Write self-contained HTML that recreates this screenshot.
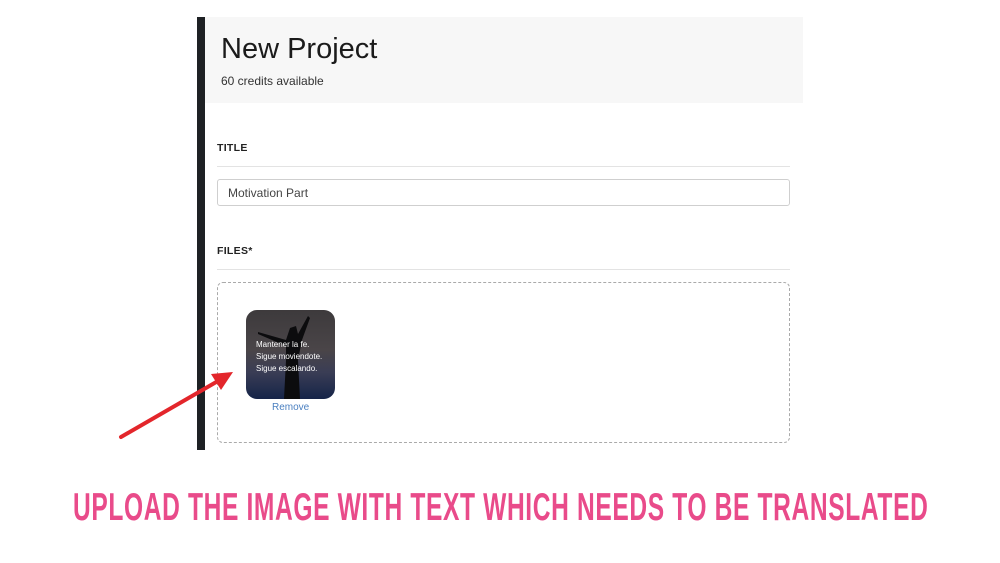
<!DOCTYPE html>
<html><head><style>
body{margin:0;width:1000px;height:563px;background:#fff;position:relative;overflow:hidden;font-family:"Liberation Sans",sans-serif;}
.bar{position:absolute;left:197px;top:17px;width:8px;height:433px;background:#1e2124;}
.hdr{position:absolute;left:205px;top:17px;width:598px;height:86px;background:#f7f7f7;}
.h1{position:absolute;left:221px;top:33px;font-size:29px;color:#1b1b1b;}
.sub{position:absolute;left:221px;top:74px;font-size:12px;color:#333;}
.lbl{position:absolute;left:217px;font-size:10.5px;font-weight:bold;color:#222;letter-spacing:.3px;}
.hr{position:absolute;left:217px;width:573px;height:1px;background:#e3e3e3;}
.inp{position:absolute;left:217px;top:179px;height:27px;border:1px solid #cfcfcf;border-radius:3px;font-size:12px;color:#444;line-height:27px;box-sizing:border-box;padding-left:10px;width:573px;}
.drop{position:absolute;left:217px;top:282px;width:573px;height:161px;border:1.5px dashed #aaa;border-radius:6px;box-sizing:border-box;}
.img{position:absolute;left:246px;top:310px;width:89px;height:89px;border-radius:11px;background:linear-gradient(#3d3a3c,#4a4548 45%,#3a3d55 70%,#152448);overflow:hidden;}
.img span{position:absolute;left:10px;font-size:8px;color:#fff;}
.rm{position:absolute;left:272px;top:402px;font-size:10px;color:#4a7fc0;}
.cap{position:absolute;left:73px;top:486px;font-size:39px;font-weight:bold;color:#e94b8a;white-space:nowrap;transform:scaleX(0.63);transform-origin:left top;letter-spacing:1px;}
</style></head><body>
<div class="bar"></div>
<div class="hdr"></div>
<div class="h1">New Project</div>
<div class="sub">60 credits available</div>
<div class="lbl" style="top:142px">TITLE</div>
<div class="hr" style="top:166px"></div>
<div class="inp">Motivation Part</div>
<div class="lbl" style="top:245px">FILES*</div>
<div class="hr" style="top:269px"></div>
<div class="drop"></div>
<div class="img">
<svg width="89" height="89" style="position:absolute;left:0;top:0"><path d="M12 22 L40 30 L44 18 L50 16 L52 24 L62 6 L64 8 L56 30 L52 50 L54 89 L38 89 L40 50 L40 36 L12 24Z" fill="#0c0c0e"/></svg>
<span style="top:30px">Mantener la fe.</span>
<span style="top:42px">Sigue moviendote.</span>
<span style="top:54px">Sigue escalando.</span>
</div>
<div class="rm">Remove</div>
<svg width="1000" height="563" style="position:absolute;left:0;top:0"><line x1="121" y1="437" x2="218" y2="381" stroke="#e3262b" stroke-width="4" stroke-linecap="round"/><path d="M233 372 L211 374 L221 390Z" fill="#e3262b"/></svg>
<div class="cap">UPLOAD THE IMAGE WITH TEXT WHICH NEEDS TO BE TRANSLATED</div>
</body></html>
